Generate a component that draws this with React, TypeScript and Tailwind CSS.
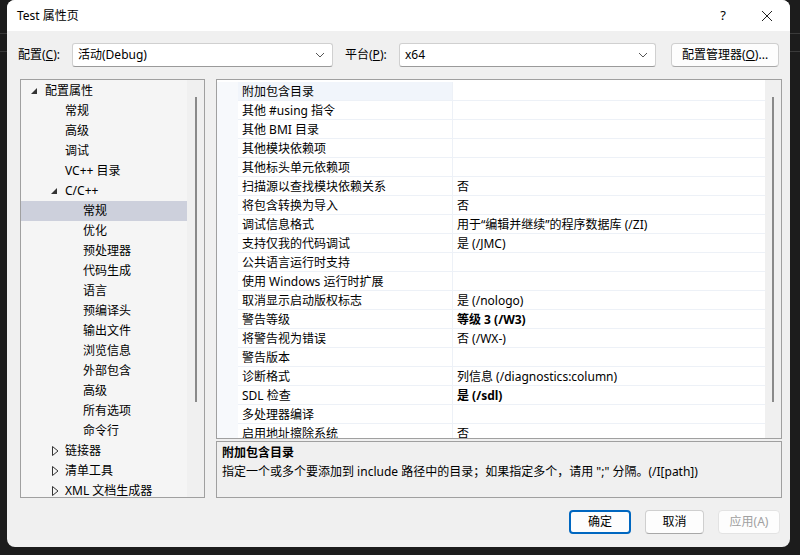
import type { ReactNode } from "react";

const FONT = {
  fontFamily: '"Noto Sans", "Noto Sans CJK SC", "Liberation Sans", sans-serif',
};

type Prop = { name: string; value?: string; bold?: boolean };

const props: Prop[] = [
  { name: "附加包含目录" },
  { name: "其他 #using 指令" },
  { name: "其他 BMI 目录" },
  { name: "其他模块依赖项" },
  { name: "其他标头单元依赖项" },
  { name: "扫描源以查找模块依赖关系", value: "否" },
  { name: "将包含转换为导入", value: "否" },
  { name: "调试信息格式", value: "用于“编辑并继续”的程序数据库 (/ZI)" },
  { name: "支持仅我的代码调试", value: "是 (/JMC)" },
  { name: "公共语言运行时支持" },
  { name: "使用 Windows 运行时扩展" },
  { name: "取消显示启动版权标志", value: "是 (/nologo)" },
  { name: "警告等级", value: "等级 3 (/W3)", bold: true },
  { name: "将警告视为错误", value: "否 (/WX-)" },
  { name: "警告版本" },
  { name: "诊断格式", value: "列信息 (/diagnostics:column)" },
  { name: "SDL 检查", value: "是 (/sdl)", bold: true },
  { name: "多处理器编译" },
  { name: "启用地址擦除系统", value: "否" },
];

type Node = { label: string; depth: number; arrow?: "open" | "closed"; selected?: boolean };

const tree: Node[] = [
  { label: "配置属性", depth: 0, arrow: "open" },
  { label: "常规", depth: 1 },
  { label: "高级", depth: 1 },
  { label: "调试", depth: 1 },
  { label: "VC++ 目录", depth: 1 },
  { label: "C/C++", depth: 1, arrow: "open" },
  { label: "常规", depth: 2, selected: true },
  { label: "优化", depth: 2 },
  { label: "预处理器", depth: 2 },
  { label: "代码生成", depth: 2 },
  { label: "语言", depth: 2 },
  { label: "预编译头", depth: 2 },
  { label: "输出文件", depth: 2 },
  { label: "浏览信息", depth: 2 },
  { label: "外部包含", depth: 2 },
  { label: "高级", depth: 2 },
  { label: "所有选项", depth: 2 },
  { label: "命令行", depth: 2 },
  { label: "链接器", depth: 1, arrow: "closed" },
  { label: "清单工具", depth: 1, arrow: "closed" },
  { label: "XML 文档生成器", depth: 1, arrow: "closed" },
];

const pad = ["pl-[24px]", "pl-[44px]", "pl-[62px]"];

function Arrow({ kind }: { kind: "open" | "closed" }) {
  if (kind === "open")
    return (
      <svg width="7" height="7" viewBox="0 0 7 7" className="absolute -ml-[14px] mt-[1px]">
        <polygon points="6,0 6,6 0,6" fill="#333" />
      </svg>
    );
  return (
    <svg width="7" height="10" viewBox="0 0 7 10" className="absolute -ml-[13px]">
      <polygon points="0.5,0.5 6,5 0.5,9.5" fill="none" stroke="#333" strokeWidth="1" />
    </svg>
  );
}

function Combo({ value, className }: { value: string; className: string }) {
  return (
    <div
      className={`flex h-[24px] items-center justify-between rounded-[3px] border border-[#d0d0d0] border-b-[#9a9a9a] bg-white pl-[5px] pr-[7px] ${className}`}
    >
      <span>{value}</span>
      <svg width="10" height="6" viewBox="0 0 10 6">
        <path d="M1 1 L5 5 L9 1" fill="none" stroke="#555" strokeWidth="1" />
      </svg>
    </div>
  );
}

function Button({ children, variant }: { children: ReactNode; variant?: "primary" | "disabled" }) {
  const cls =
    variant === "primary"
      ? "border-[#0067c0] border-2"
      : variant === "disabled"
        ? "border-[#e3e3e3] text-[#a0a0a0] bg-[#f5f5f5]"
        : "border-[#cfcfcf] border-b-[#a8a8a8]";
  return (
    <div className={`flex h-[24px] items-center justify-center whitespace-nowrap rounded-[4px] border bg-[#fdfdfd] ${cls}`}>
      {children}
    </div>
  );
}

export default function App() {
  return (
    <div className="relative h-[555px] w-[800px] overflow-hidden bg-[#1c1c1c] text-[12px] text-black" style={FONT}>
      <div className="absolute left-0 top-[33px] h-[1px] w-full bg-[#3a3a3a]" />
      <div className="absolute left-0 top-[51px] h-[1px] w-full bg-[#3a3a3a]" />

      <div className="absolute left-[7px] top-0 flex h-[547px] w-[783px] flex-col overflow-hidden rounded-[8px] bg-[#f0f0f0]">
        {/* title bar */}
        <div className="flex h-[31px] shrink-0 items-center bg-white pl-[10px]">
          <span className="flex-1 text-[12px]">Test 属性页</span>
          <span className="w-[46px] pl-[4px] text-center text-[13px]">?</span>
          <svg width="46" height="12" viewBox="0 0 46 12">
            <path d="M18 1 L28 11 M28 1 L18 11" stroke="#222" strokeWidth="1" />
          </svg>
        </div>

        {/* config row */}
        <div className="mt-[12px] flex h-[24px] items-center whitespace-nowrap">
          <span className="ml-[11px] w-[54px]">配置(<u>C</u>):</span>
          <Combo value="活动(Debug)" className="w-[261px]" />
          <span className="ml-[12px] w-[54px]">平台(<u>P</u>):</span>
          <Combo value="x64" className="w-[257px]" />
          <div className="ml-[15px] w-[108px]">
            <Button>配置管理器(<u>O</u>)...</Button>
          </div>
        </div>

        {/* main */}
        <div className="mt-[12px] flex h-[419px] gap-[11px] pl-[13px]">
          {/* tree */}
          <div className="relative flex h-[419px] w-[185px] border border-[#a0a0a0] bg-[#f5f5f5]">
            <div className="flex w-[166px] flex-col pt-[1px]">
              {tree.map((n, i) => (
                <div
                  key={i}
                  className={`relative flex h-[20px] shrink-0 items-center ${pad[n.depth]} ${n.selected ? "bg-[#cdd0dc]" : ""}`}
                >
                  {n.arrow && <Arrow kind={n.arrow} />}
                  <span>{n.label}</span>
                </div>
              ))}
            </div>
            <div className="flex flex-1 justify-center bg-[#f0f0f0] pt-[17px]">
              <div className="h-[305px] w-[2px] bg-[#8a8a8a]" />
            </div>
          </div>

          {/* property grid + description */}
          <div className="flex w-[566px] flex-col">
            <div className="flex h-[360px] overflow-hidden border border-[#a0a0a0] bg-white">
              <div className="flex flex-1 flex-col pt-[2px]">
                {props.map((p, i) => (
                  <div key={i} className="flex h-[19px] shrink-0">
                    <div className="w-[21px] bg-[#f7f9fc]" />
                    <div
                      className={`flex w-[215px] items-center border-b border-r border-[#edf1f7] pl-[4px] pt-[2px] ${i === 0 ? "bg-[#f1f5fb]" : ""}`}
                    >
                      {p.name}
                    </div>
                    <div className={`flex flex-1 items-center border-b border-[#edf1f7] pl-[4px] pt-[2px] ${p.bold ? "font-bold" : ""}`}>
                      {p.value ?? ""}
                    </div>
                  </div>
                ))}
              </div>
              <div className="flex w-[16px] justify-center bg-[#f0f0f0] pt-[17px]">
                <div className="h-[305px] w-[2px] bg-[#8a8a8a]" />
              </div>
            </div>
            <div className="mt-[2px] flex h-[57px] flex-col border border-[#a0a0a0] px-[5px] pt-[1px]">
              <span className="font-bold leading-[19px]">附加包含目录</span>
              <span className="leading-[19px]">
                指定一个或多个要添加到 include 路径中的目录；如果指定多个，请用 ";" 分隔。(/I[path])
              </span>
            </div>
          </div>
        </div>

        {/* buttons */}
        <div className="mt-[12px] flex justify-end gap-[14px] pr-[10px]">
          <div className="w-[62px]">
            <Button variant="primary">确定</Button>
          </div>
          <div className="w-[59px]">
            <Button>取消</Button>
          </div>
          <div className="w-[62px]">
            <Button variant="disabled">应用(A)</Button>
          </div>
        </div>
      </div>
    </div>
  );
}
